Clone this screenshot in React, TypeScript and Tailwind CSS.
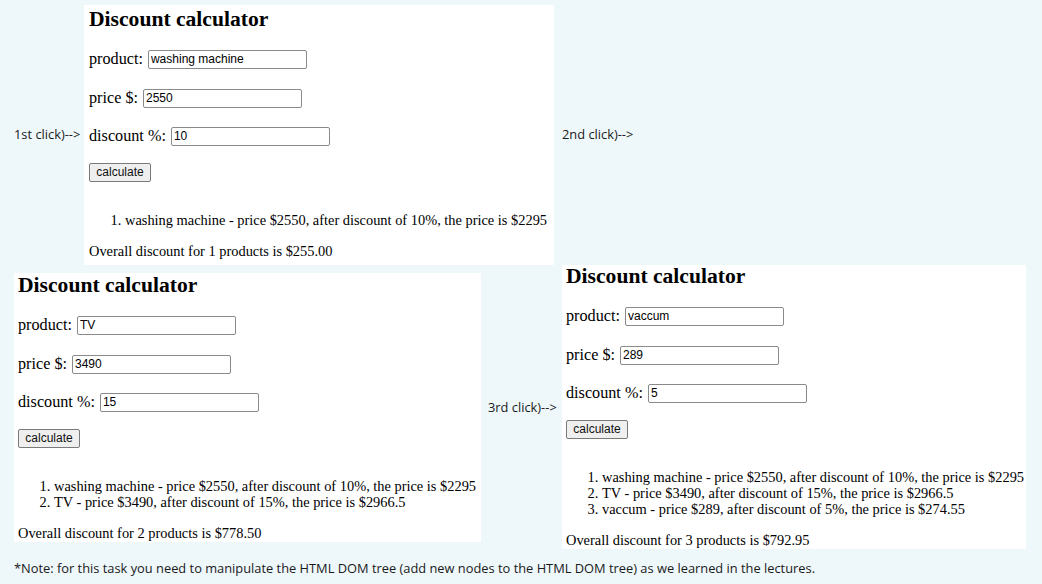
type Item = { name: string; price: number; discount: number; final: string };

const items: Item[] = [
  { name: "washing machine", price: 2550, discount: 10, final: "2295" },
  { name: "TV", price: 3490, discount: 15, final: "2966.5" },
  { name: "vaccum", price: 289, discount: 5, final: "274.55" },
];

function Field({ label, value }: { label: string; value: string }) {
  return (
    <div className="flex h-[20px] items-center">
      <span className="mr-[5px] whitespace-nowrap">{label}</span>
      <input
        readOnly
        value={value}
        className="h-[19px] w-[159px] rounded-[2px] border border-[#8a8a8a] bg-white px-[2px] font-['Liberation_Sans',Arial,sans-serif] text-[12px] text-black outline-none"
      />
    </div>
  );
}

function Calculator({
  product,
  price,
  discount,
  count,
  total,
  className,
}: {
  product: string;
  price: string;
  discount: string;
  count: number;
  total: string;
  className: string;
}) {
  return (
    <div
      className={`flex shrink-0 flex-col bg-white pl-[5px] font-['Liberation_Serif','Times_New_Roman',serif] text-[16.2px] text-black ${className}`}
    >
      <h2 className="h-[22px] text-[21.6px] font-bold leading-[22px]">
        Discount calculator
      </h2>
      <div className="mt-[19px]">
        <Field label="product:" value={product} />
      </div>
      <div className="mt-[19px]">
        <Field label="price $:" value={price} />
      </div>
      <div className="mt-[18px]">
        <Field label="discount %:" value={discount} />
      </div>
      <div className="mt-[13px]">
        <button
          type="button"
          className="h-[19px] w-[62px] rounded-[2px] border border-[#7a7a7a] bg-[#efefef] font-['Liberation_Sans',Arial,sans-serif] text-[12px] leading-[17px] text-[#111]"
        >
          calculate
        </button>
      </div>
      <ol className="mt-[29px] list-decimal pl-[36px] text-[14.4px] leading-[16px]">
        {items.slice(0, count).map((item) => (
          <li key={item.name} className="whitespace-nowrap">
            {item.name} - price ${item.price}, after discount of {item.discount}%, the price is ${item.final}
          </li>
        ))}
      </ol>
      <p className="mt-[14px] h-[18px] text-[14.4px] leading-[18px]">
        Overall discount for {count} products is ${total}
      </p>
    </div>
  );
}

export default function App() {
  return (
    <div className="h-[584px] w-[1042px] overflow-hidden bg-[#eef7fa] pt-[5px] font-['Open_Sans','Noto_Sans',sans-serif] text-[12.85px] text-[#1a1a1a]">
      <div className="flex items-center pl-[14px]">
        <div className="w-[70px] whitespace-nowrap">1st click)--&gt;</div>
        <Calculator
          product="washing machine"
          price="2550"
          discount="10"
          count={1}
          total="255.00"
          className="h-[260px] w-[470px] pt-[3px]"
        />
        <div className="ml-[8px] whitespace-nowrap">2nd click)--&gt;</div>
      </div>

      <div className="flex items-start pl-[14px]">
        <Calculator
          product="TV"
          price="3490"
          discount="15"
          count={2}
          total="778.50"
          className="mt-[8px] h-[269px] w-[467px] pt-[1px] !pl-[4px]"
        />
        <div className="mt-[133px] w-[81px] whitespace-nowrap pl-[7px]">
          3rd click)--&gt;
        </div>
        <Calculator
          product="vaccum"
          price="289"
          discount="5"
          count={3}
          total="792.95"
          className="h-[284px] w-[464px] pt-0 !pl-[4px]"
        />
      </div>

      <p className="mt-[10px] pl-[14px] whitespace-nowrap">
        *Note: for this task you need to manipulate the HTML DOM tree (add new nodes to the HTML DOM tree) as we learned in the lectures.
      </p>
    </div>
  );
}
